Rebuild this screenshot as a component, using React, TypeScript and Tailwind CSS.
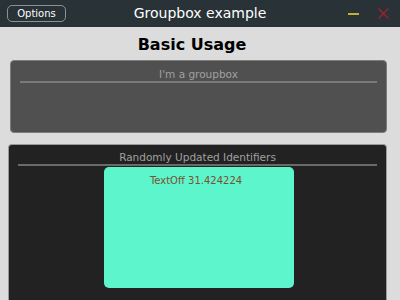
import React from "react";

export default function App() {
  return (
    <div className="w-[400px] h-[300px] overflow-hidden bg-[#dcdcdc] flex flex-col" style={{ fontFamily: '"DejaVu Sans", sans-serif' }}>
      <div className="h-[27px] bg-[#283237] grid grid-cols-[1fr_auto_1fr] items-center px-[7px] shrink-0">
        <div className="flex">
          <div className="w-[59px] h-[17px] rounded-[5px] border border-[#8a9296] text-white text-[10px] flex items-center justify-center">Options</div>
        </div>
        <div className="text-center text-white text-[14px]">Groupbox example</div>
        <div className="flex items-center justify-end">
          <div className="w-[11px] h-[2px] bg-[#c2ae3a] mr-[19px]"></div>
          <svg width="11" height="11" viewBox="0 0 11 11" className="mr-[4px]">
            <path d="M0.5 0.5 L10.5 10.5 M10.5 0.5 L0.5 10.5" stroke="#a0202c" strokeWidth="1.4" />
          </svg>
        </div>
      </div>
      <div className="text-center font-bold text-[16px] text-black h-[33px] leading-[33px] pt-[1px] pr-[16px]">Basic Usage</div>
      <div className="ml-[10px] mr-[13px] h-[73px] bg-[#505050] border border-[#7c7c7c] rounded-[4px] flex flex-col items-stretch">
        <div className="text-center text-[10.5px] text-[#a0a0a0] leading-[13px] mt-[7px]">I'm a groupbox</div>
        <div className="mx-[9px] h-[2px] bg-[#7a7a7a]"></div>
      </div>
      <div className="ml-[8px] mr-[13px] mt-[11px] flex-1 bg-[#222222] border border-[#9a9a9a] border-b-0 rounded-t-[4px] flex flex-col">
        <div className="text-center text-[10.5px] text-[#a0a0a0] leading-[13px] mt-[6px]">Randomly Updated Identifiers</div>
        <div className="mx-[9px] h-[2px] bg-[#6a6a6a]"></div>
        <div className="ml-[95px] w-[190px] h-[121px] mt-[1px] bg-[#5cf5cc] rounded-[5px] flex justify-center pr-[6px]">
          <div className="text-[10px] text-[#7e5030] mt-[8px] leading-[12px]">TextOff 31.424224</div>
        </div>
      </div>
    </div>
  );
}
